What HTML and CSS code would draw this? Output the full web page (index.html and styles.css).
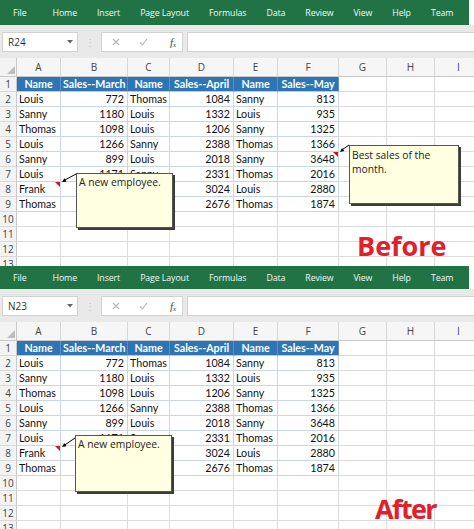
FILE: index.html
```html
<!DOCTYPE html>
<html>
<head>
<meta charset="utf-8">
<link rel="stylesheet" href="styles.css">
</head>
<body>
<section class="sheet sheet--before">
  <nav class="ribbon">
    <span class="tab tab--file">File</span><span class="tab">Home</span><span class="tab">Insert</span><span class="tab">Page Layout</span><span class="tab">Formulas</span><span class="tab">Data</span><span class="tab">Review</span><span class="tab">View</span><span class="tab">Help</span><span class="tab">Team</span>
  </nav>
  <div class="bar">
    <div class="namebox"><span>R24</span><svg class="dd" width="6" height="4" viewBox="0 0 6 4"><polygon points="0,0 6,0 3,3.5" fill="#666"/></svg></div>
    <div class="sep">⋮</div>
    <div class="fxbox">
      <svg width="8" height="8" viewBox="0 0 8 8"><path d="M1 1 L7 7 M7 1 L1 7" stroke="#b5b5b5" stroke-width="1.1"/></svg>
      <svg width="9" height="8" viewBox="0 0 9 8"><path d="M1 4.5 L3.5 7 L8 1" stroke="#b5b5b5" stroke-width="1.1" fill="none"/></svg>
      <span class="fx">f<sub>x</sub></span>
    </div>
    <div class="input"></div>
  </div>
  <div class="grid">
    <div class="corner"><svg width="17" height="19" viewBox="0 0 17 19"><polygon points="7,16 15,16 15,8" fill="#bdbdbd"/></svg></div><div class="ch">A</div><div class="ch">B</div><div class="ch">C</div><div class="ch">D</div><div class="ch">E</div><div class="ch">F</div><div class="ch">G</div><div class="ch">H</div><div class="ch">I</div>
    <div class="rh">1</div><div class="c h">Name</div><div class="c h">Sales--March</div><div class="c h">Name</div><div class="c h">Sales--April</div><div class="c h">Name</div><div class="c h">Sales--May</div><div class="c"></div><div class="c"></div><div class="c"></div>
    <div class="rh">2</div><div class="c t">Louis</div><div class="c t n">772</div><div class="c t">Thomas</div><div class="c t n">1084</div><div class="c t">Sanny</div><div class="c t n">813</div><div class="c"></div><div class="c"></div><div class="c"></div>
    <div class="rh">3</div><div class="c t">Sanny</div><div class="c t n">1180</div><div class="c t">Louis</div><div class="c t n">1332</div><div class="c t">Louis</div><div class="c t n">935</div><div class="c"></div><div class="c"></div><div class="c"></div>
    <div class="rh">4</div><div class="c t">Thomas</div><div class="c t n">1098</div><div class="c t">Louis</div><div class="c t n">1206</div><div class="c t">Sanny</div><div class="c t n">1325</div><div class="c"></div><div class="c"></div><div class="c"></div>
    <div class="rh">5</div><div class="c t">Louis</div><div class="c t n">1266</div><div class="c t">Sanny</div><div class="c t n">2388</div><div class="c t">Thomas</div><div class="c t n">1366</div><div class="c"></div><div class="c"></div><div class="c"></div>
    <div class="rh">6</div><div class="c t">Sanny</div><div class="c t n">899</div><div class="c t">Louis</div><div class="c t n">2018</div><div class="c t">Sanny</div><div class="c t n note">3648</div><div class="c"></div><div class="c"></div><div class="c"></div>
    <div class="rh">7</div><div class="c t">Louis</div><div class="c t n">1171</div><div class="c t">Sanny</div><div class="c t n">2331</div><div class="c t">Thomas</div><div class="c t n">2016</div><div class="c"></div><div class="c"></div><div class="c"></div>
    <div class="rh">8</div><div class="c t note">Frank</div><div class="c t n"></div><div class="c t"></div><div class="c t n">3024</div><div class="c t">Louis</div><div class="c t n">2880</div><div class="c"></div><div class="c"></div><div class="c"></div>
    <div class="rh">9</div><div class="c t">Thomas</div><div class="c t n"></div><div class="c t"></div><div class="c t n">2676</div><div class="c t">Thomas</div><div class="c t n">1874</div><div class="c"></div><div class="c"></div><div class="c"></div>
    <div class="rh">10</div><div class="c"></div><div class="c"></div><div class="c"></div><div class="c"></div><div class="c"></div><div class="c"></div><div class="c"></div><div class="c"></div><div class="c"></div>
    <div class="rh">11</div><div class="c"></div><div class="c"></div><div class="c"></div><div class="c"></div><div class="c"></div><div class="c"></div><div class="c"></div><div class="c"></div><div class="c"></div>
    <div class="rh">12</div><div class="c"></div><div class="c"></div><div class="c"></div><div class="c"></div><div class="c"></div><div class="c"></div><div class="c"></div><div class="c"></div><div class="c"></div>
    <div class="rh">13</div><div class="c"></div><div class="c"></div><div class="c"></div><div class="c"></div><div class="c"></div><div class="c"></div><div class="c"></div><div class="c"></div><div class="c"></div>
  </div>
  <svg class="leaders" width="469" height="266" viewBox="0 0 469 266">
    <line x1="64" y1="180.5" x2="76" y2="174" stroke="#000" stroke-width="1"/>
    <polygon points="62,182 66.5,181.7 64.5,178.3" fill="#000"/>
    <line x1="342" y1="150" x2="349" y2="145" stroke="#000" stroke-width="1"/>
    <polygon points="340,152 344.4,151.1 342,147.9" fill="#000"/>
  </svg>
  <div class="comment comment--emp-before">A new employee.</div>
  <div class="comment comment--best">Best sales of the month.</div>
  <div class="label label--before">Before</div>
</section>

<section class="sheet sheet--after">
  <nav class="ribbon">
    <span class="tab tab--file">File</span><span class="tab">Home</span><span class="tab">Insert</span><span class="tab">Page Layout</span><span class="tab">Formulas</span><span class="tab">Data</span><span class="tab">Review</span><span class="tab">View</span><span class="tab">Help</span><span class="tab">Team</span>
  </nav>
  <div class="bar">
    <div class="namebox"><span>N23</span><svg class="dd" width="6" height="4" viewBox="0 0 6 4"><polygon points="0,0 6,0 3,3.5" fill="#666"/></svg></div>
    <div class="sep">⋮</div>
    <div class="fxbox">
      <svg width="8" height="8" viewBox="0 0 8 8"><path d="M1 1 L7 7 M7 1 L1 7" stroke="#b5b5b5" stroke-width="1.1"/></svg>
      <svg width="9" height="8" viewBox="0 0 9 8"><path d="M1 4.5 L3.5 7 L8 1" stroke="#b5b5b5" stroke-width="1.1" fill="none"/></svg>
      <span class="fx">f<sub>x</sub></span>
    </div>
    <div class="input"></div>
  </div>
  <div class="grid">
    <div class="corner"><svg width="17" height="19" viewBox="0 0 17 19"><polygon points="7,16 15,16 15,8" fill="#bdbdbd"/></svg></div><div class="ch">A</div><div class="ch">B</div><div class="ch">C</div><div class="ch">D</div><div class="ch">E</div><div class="ch">F</div><div class="ch">G</div><div class="ch">H</div><div class="ch">I</div>
    <div class="rh">1</div><div class="c h">Name</div><div class="c h">Sales--March</div><div class="c h">Name</div><div class="c h">Sales--April</div><div class="c h">Name</div><div class="c h">Sales--May</div><div class="c"></div><div class="c"></div><div class="c"></div>
    <div class="rh">2</div><div class="c t">Louis</div><div class="c t n">772</div><div class="c t">Thomas</div><div class="c t n">1084</div><div class="c t">Sanny</div><div class="c t n">813</div><div class="c"></div><div class="c"></div><div class="c"></div>
    <div class="rh">3</div><div class="c t">Sanny</div><div class="c t n">1180</div><div class="c t">Louis</div><div class="c t n">1332</div><div class="c t">Louis</div><div class="c t n">935</div><div class="c"></div><div class="c"></div><div class="c"></div>
    <div class="rh">4</div><div class="c t">Thomas</div><div class="c t n">1098</div><div class="c t">Louis</div><div class="c t n">1206</div><div class="c t">Sanny</div><div class="c t n">1325</div><div class="c"></div><div class="c"></div><div class="c"></div>
    <div class="rh">5</div><div class="c t">Louis</div><div class="c t n">1266</div><div class="c t">Sanny</div><div class="c t n">2388</div><div class="c t">Thomas</div><div class="c t n">1366</div><div class="c"></div><div class="c"></div><div class="c"></div>
    <div class="rh">6</div><div class="c t">Sanny</div><div class="c t n">899</div><div class="c t">Louis</div><div class="c t n">2018</div><div class="c t">Sanny</div><div class="c t n">3648</div><div class="c"></div><div class="c"></div><div class="c"></div>
    <div class="rh">7</div><div class="c t">Louis</div><div class="c t n">1171</div><div class="c t">Sanny</div><div class="c t n">2331</div><div class="c t">Thomas</div><div class="c t n">2016</div><div class="c"></div><div class="c"></div><div class="c"></div>
    <div class="rh">8</div><div class="c t note">Frank</div><div class="c t n"></div><div class="c t"></div><div class="c t n">3024</div><div class="c t">Louis</div><div class="c t n">2880</div><div class="c"></div><div class="c"></div><div class="c"></div>
    <div class="rh">9</div><div class="c t">Thomas</div><div class="c t n"></div><div class="c t"></div><div class="c t n">2676</div><div class="c t">Thomas</div><div class="c t n">1874</div><div class="c"></div><div class="c"></div><div class="c"></div>
    <div class="rh">10</div><div class="c"></div><div class="c"></div><div class="c"></div><div class="c"></div><div class="c"></div><div class="c"></div><div class="c"></div><div class="c"></div><div class="c"></div>
    <div class="rh">11</div><div class="c"></div><div class="c"></div><div class="c"></div><div class="c"></div><div class="c"></div><div class="c"></div><div class="c"></div><div class="c"></div><div class="c"></div>
    <div class="rh">12</div><div class="c"></div><div class="c"></div><div class="c"></div><div class="c"></div><div class="c"></div><div class="c"></div><div class="c"></div><div class="c"></div><div class="c"></div>
    <div class="rh">13</div><div class="c"></div><div class="c"></div><div class="c"></div><div class="c"></div><div class="c"></div><div class="c"></div><div class="c"></div><div class="c"></div><div class="c"></div>
  </div>
  <svg class="leaders" width="469" height="263" viewBox="0 0 469 263">
    <line x1="64" y1="179.5" x2="75" y2="172" stroke="#000" stroke-width="1"/>
    <polygon points="62,181 66.4,180.3 64.2,177.1" fill="#000"/>
  </svg>
  <div class="comment comment--emp-after">A new employee.</div>
  <div class="label label--after">After</div>
</section>
</body>
</html>
```

FILE: styles.css
```css
* { box-sizing: border-box; margin: 0; padding: 0; }

html, body {
  width: 474px;
  height: 529px;
  overflow: hidden;
  background: #ffffff;
}

body {
  font-family: "Lato", "Open Sans", sans-serif;
}

.sheet {
  position: relative;
  width: 474px;
  overflow: hidden;
  background: #ffffff;
}

.sheet--before { height: 266px; }
.sheet--after { height: 263px; }

/* Ribbon */
.ribbon {
  width: 469px;
  height: 25px;
  background: #217346;
  display: flex;
  align-items: center;
  gap: 20px;
  padding-left: 13px;
  color: #f2f7f3;
  font-family: "Open Sans", sans-serif;
  font-size: 8.8px;
  letter-spacing: -0.1px;
  white-space: nowrap;
}

.sheet--after .ribbon { height: 23px; }

.tab--file { margin-right: 6px; }

/* Formula bar */
.bar {
  height: 33px;
  padding: 7px 0 6px 2px;
  background: #e9e9e9;
  display: flex;
  align-items: stretch;
}

.namebox {
  width: 76px;
  background: #ffffff;
  border: 1px solid #d2d2d2;
  display: flex;
  align-items: center;
  justify-content: space-between;
  padding: 0 4px 0 5px;
  font-family: "Open Sans", sans-serif;
  font-size: 10px;
  color: #333333;
}

.sep {
  width: 23px;
  display: flex;
  align-items: center;
  justify-content: center;
  color: #c2c2c2;
  font-size: 10px;
}

.fxbox {
  width: 82px;
  background: #ffffff;
  border: 1px solid #d2d2d2;
  display: flex;
  align-items: center;
  padding: 0 0 0 10px;
  gap: 19px;
}

.fx {
  font-family: "Liberation Serif", serif;
  font-style: italic;
  font-size: 11px;
  color: #444444;
  margin-left: 3px;
}

.fx sub {
  font-size: 7px;
  vertical-align: -1px;
}

.input {
  flex: 1;
  margin-left: 4px;
  background: #ffffff;
  border: 1px solid #d2d2d2;
  border-right: none;
}

/* Grid */
.grid {
  display: grid;
  grid-template-columns: 17px 44px 67px 42px 64px 44px 61px 48px 48px 48px;
  grid-template-rows: 19px;
  grid-auto-rows: 15px;
  font-family: "Lato", sans-serif;
  font-size: 10.7px;
  color: #111111;
}

.corner {
  background: #f3f3f3;
  border-right: 1px solid #c9c9c9;
  border-bottom: 1px solid #c9c9c9;
}

.corner svg { display: block; }

.ch {
  background: #f6f6f6;
  border-right: 1px solid #d6d6d6;
  border-bottom: 1px solid #c9c9c9;
  display: flex;
  align-items: center;
  justify-content: center;
  font-family: "Open Sans", sans-serif;
  font-size: 10px;
  color: #444444;
}

.rh {
  background: #f3f3f3;
  border-right: 1px solid #c9c9c9;
  border-bottom: 1px solid #dadada;
  display: flex;
  align-items: center;
  justify-content: center;
  font-family: "Open Sans", sans-serif;
  font-size: 10px;
  color: #444444;
}

.c {
  position: relative;
  border-right: 1px solid #dcdcdc;
  border-bottom: 1px solid #dcdcdc;
  padding: 0 2px;
  line-height: 14px;
  white-space: nowrap;
  overflow: hidden;
}

.t { border-color: #cad6e4; }

.h {
  background: #2e75b6;
  color: #ffffff;
  font-weight: 700;
  text-align: center;
  border-right-color: #5a91c6;
  border-bottom-color: #b7cbe2;
}

.n { text-align: right; padding-right: 3px; }

.note::after {
  content: "";
  position: absolute;
  top: 0;
  right: 0;
  width: 0;
  height: 0;
  border-top: 5px solid #d0141c;
  border-left: 5px solid transparent;
}

/* Overlays */
.leaders {
  position: absolute;
  left: 0;
  top: 0;
  pointer-events: none;
}

.comment {
  position: absolute;
  background: #ffffe1;
  border: 1px solid #555555;
  box-shadow: 2px 2px 0 #3c3c3c;
  font-family: "Open Sans", sans-serif;
  font-size: 10.3px;
  line-height: 14px;
  color: #222222;
  padding: 1px 2px;
}

.comment--emp-before { left: 76px; top: 173px; width: 97px; height: 55px; }
.comment--best { left: 349px; top: 145px; width: 110px; height: 59px; padding-top: 2px; }
.comment--emp-after { left: 75px; top: 169px; width: 97px; height: 57px; }

.label {
  position: absolute;
  font-family: "Open Sans", sans-serif;
  font-weight: 700;
  font-size: 27px;
  line-height: 1;
  color: #e0202b;
}

.label--before { left: 357px; top: 232px; }
.label--after { left: 375px; top: 229px; letter-spacing: -1.6px; }
```
